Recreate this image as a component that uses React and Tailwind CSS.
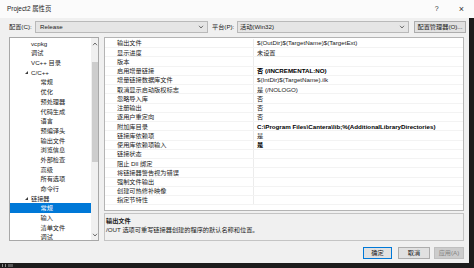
import React from "react";

const treeItems = [
    { label: "vcpkg", level: 0 },
    { label: "调试", level: 0 },
    { label: "VC++ 目录", level: 0 },
    { label: "C/C++", level: 0, open: true },
    { label: "常规", level: 1 },
    { label: "优化", level: 1 },
    { label: "预处理器", level: 1 },
    { label: "代码生成", level: 1 },
    { label: "语言", level: 1 },
    { label: "预编译头", level: 1 },
    { label: "输出文件", level: 1 },
    { label: "浏览信息", level: 1 },
    { label: "外部检查", level: 1 },
    { label: "高级", level: 1 },
    { label: "所有选项", level: 1 },
    { label: "命令行", level: 1 },
    { label: "链接器", level: 0, open: true },
    { label: "常规", level: 1, selected: true },
    { label: "输入", level: 1 },
    { label: "清单文件", level: 1 },
    { label: "调试", level: 1 },
];

const props = [
    ["输出文件", "$(OutDir)$(TargetName)$(TargetExt)"],
    ["显示进度", "未设置"],
    ["版本", ""],
    ["启用增量链接", "否 (/INCREMENTAL:NO)", true],
    ["增量链接数据库文件", "$(IntDir)$(TargetName).ilk"],
    ["取消显示启动版权标志", "是 (/NOLOGO)"],
    ["忽略导入库", "否"],
    ["注册输出", "否"],
    ["逐用户重定向", "否"],
    ["附加库目录", "C:\\Program Files\\Cantera\\lib;%(AdditionalLibraryDirectories)", true],
    ["链接库依赖项", "是"],
    ["使用库依赖项输入", "是", true],
    ["链接状态", ""],
    ["阻止 Dll 绑定", ""],
    ["将链接器警告视为错误", ""],
    ["强制文件输出", ""],
    ["创建可热修补映像", ""],
    ["指定节特性", ""],
];

const Chevron = ({ up }) => (
    <svg width="6" height="4" viewBox="0 0 6 4" fill="none" stroke="#606060" strokeWidth="0.9">
        {up ? <polyline points="1,3.2 3,1 5,3.2" /> : <polyline points="1,0.8 3,3 5,0.8" />}
    </svg>
);

const App = () => {
    return (
        <div className="w-[474px] h-[268px] overflow-hidden bg-[#1c1c1c] flex flex-col font-['Liberation_Sans','Noto_Sans_CJK_SC',sans-serif] text-[6.2px] text-[#1a1a1a]">
            {/* title bar */}
            <div className="h-[18px] shrink-0 bg-[#fbfbfb] flex items-center pl-[7px]">
                <span className="text-[6.4px]">Project2 属性页</span>
                <span className="ml-auto text-[7px] text-[#333]">?</span>
                <span className="ml-[20px] mr-[10px] text-[9px] text-[#333] leading-none">×</span>
            </div>

            <div className="flex h-[245px] shrink-0">
                <div className="w-[469px] bg-[#f0f0f0] flex flex-col">
                    {/* config row */}
                    <div className="flex items-center h-[12px] mt-[3px] pl-[9px]">
                        <span className="w-[26px]">配置(C):</span>
                        <div className="w-[173px] h-[12px] bg-[#e5e5e5] border border-[#b9b9b9] flex items-center pl-[4px] pr-[3px]">
                            <span>Release</span>
                            <span className="ml-auto"><Chevron /></span>
                        </div>
                        <span className="w-[25px] ml-[4px]">平台(P):</span>
                        <div className="w-[172px] h-[12px] bg-[#e5e5e5] border border-[#b9b9b9] flex items-center pl-[2px] pr-[3px]">
                            <span>活动(Win32)</span>
                            <span className="ml-auto"><Chevron /></span>
                        </div>
                        <div className="w-[52px] h-[12px] ml-[5px] bg-[#e1e1e1] border border-[#adadad] flex items-center justify-center">
                            配置管理器(O)...
                        </div>
                    </div>

                    {/* main area */}
                    <div className="flex h-[204px] mt-[4px] pl-[9px]">
                        {/* tree */}
                        <div className="w-[90px] h-[204px] bg-white border border-[#a8a8a8] flex overflow-hidden">
                            <div className="flex-1 pt-[0.5px] overflow-hidden">
                                {treeItems.map((item, i) => (
                                    <div
                                        key={i}
                                        className={`h-[9.7px] flex items-center ${item.selected ? "bg-[#0078d7] text-white" : ""}`}
                                    >
                                        <span className="w-[15px] shrink-0" />
                                        <span className="w-[6px] shrink-0 flex items-center">
                                            {item.open && (
                                                <span className="block w-0 h-0 border-l-[3px] border-l-transparent border-b-[3px] border-b-[#3c3c3c]" />
                                            )}
                                        </span>
                                        {item.level === 1 && <span className="w-[9.5px] shrink-0" />}
                                        <span className="whitespace-nowrap">{item.label}</span>
                                    </div>
                                ))}
                            </div>
                            <div className="w-[7px] bg-[#f0f0f0] flex flex-col items-center">
                                <div className="h-[12px] flex items-center"><Chevron up /></div>
                                <div className="w-[6px] h-[100px] mt-[12px] bg-[#cdcdcd]" />
                                <div className="mt-auto h-[10px] flex items-center"><Chevron /></div>
                            </div>
                        </div>

                        {/* right column */}
                        <div className="w-[360px] ml-[5px] flex flex-col">
                            <div className="h-[174px] bg-white border border-[#b4b4b4] pt-[1px] overflow-hidden">
                                {props.map(([name, value, bold], i) => (
                                    <div key={i} className="h-[9.24px] flex items-center border-b border-[#f3f3f3]">
                                        <span className="w-[12px] shrink-0" />
                                        <span className="w-[137px] shrink-0 whitespace-nowrap border-r border-[#ececec] h-full flex items-center">{name}</span>
                                        <span className={`pl-[3px] whitespace-nowrap ${bold ? "font-bold text-black" : ""}`}>{value}</span>
                                    </div>
                                ))}
                            </div>
                            <div className="h-[28px] mt-[2px] border border-[#c4c4c4] bg-[#f0f0f0] pl-[1px] pt-[2px]">
                                <div className="font-bold h-[9px] flex items-center">输出文件</div>
                                <div className="h-[9px] flex items-center">/OUT 选项可重写链接器创建的程序的默认名称和位置。</div>
                            </div>
                        </div>
                    </div>

                    {/* buttons */}
                    <div className="flex justify-end items-center h-[12px] mt-[5.5px] pr-[5px]">
                        <div className="w-[29px] h-[12px] bg-[#e1e1e1] border border-[#0078d7] flex items-center justify-center">确定</div>
                        <div className="w-[32px] h-[12px] ml-[6px] bg-[#e1e1e1] border border-[#adadad] flex items-center justify-center">取消</div>
                        <div className="w-[30px] h-[12px] ml-[4px] bg-[#cccccc] border border-[#bfbfbf] text-[#838383] flex items-center justify-center">应用(A)</div>
                    </div>
                </div>
                <div className="flex-1 bg-[#1c1c1c]" />
            </div>

            {/* bottom bar */}
            <div className="flex-1 bg-[#1c1c1c] flex items-center pl-[2px] gap-[2px]">
                <span className="w-[1px] h-[3px] bg-[#8a8a8a]" />
                <span className="w-[1px] h-[3px] bg-[#8a8a8a]" />
                <span className="w-[5px] h-[3px] bg-[#555]" />
            </div>
        </div>
    );
};

export default App;
